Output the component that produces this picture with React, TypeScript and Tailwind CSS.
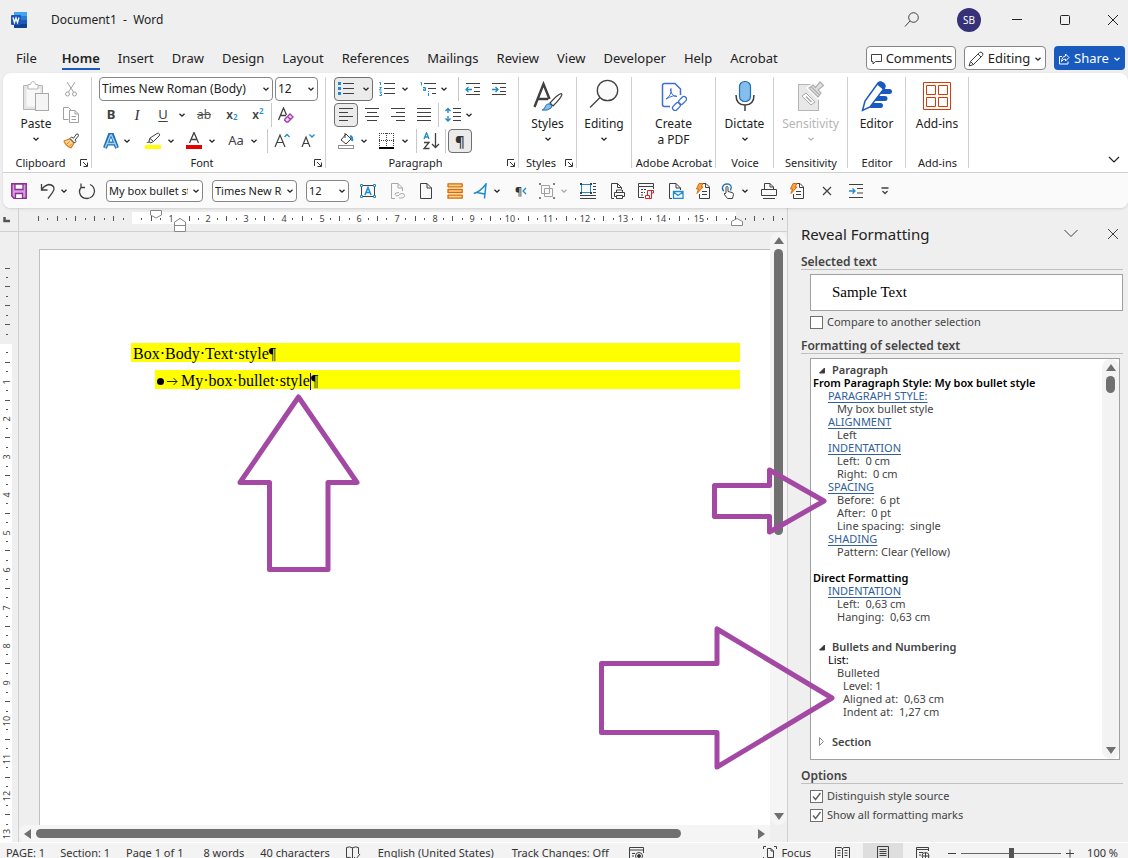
import type { ReactNode } from "react";
import clsx from "clsx";

const TABS = [
  "File",
  "Home",
  "Insert",
  "Draw",
  "Design",
  "Layout",
  "References",
  "Mailings",
  "Review",
  "View",
  "Developer",
  "Help",
  "Acrobat",
];

type IconProps = {
  w?: number;
  h?: number;
  className?: string;
  children: ReactNode;
};

const Icon = ({ w = 16, h = 16, className, children }: IconProps) => (
  <svg
    width={w}
    height={h}
    viewBox={`0 0 ${w} ${h}`}
    fill="none"
    stroke="#404040"
    className={clsx("shrink-0", className)}
    aria-hidden="true"
  >
    {children}
  </svg>
);

const Chevron = ({ className }: { className?: string }) => (
  <Icon w={8} h={8} className={className}>
    <path d="M1.5 2.8 L4 5.2 L6.5 2.8" stroke="currentColor" strokeWidth="1.3" />
  </Icon>
);

type ToolProps = {
  label: string;
  className?: string;
  active?: boolean;
  children: ReactNode;
};

const Tool = ({ label, className, active, children }: ToolProps) => (
  <button
    type="button"
    aria-label={label}
    className={clsx(
      "flex h-6 shrink-0 items-center justify-center rounded",
      active && "border border-[#707070] bg-[#ebebeb]",
      className
    )}
  >
    {children}
  </button>
);

const Divider = ({ className }: { className?: string }) => (
  <span className={clsx("h-6 w-px shrink-0 bg-[#c8c8c8]", className)} />
);

const Launcher = ({ label }: { label: string }) => (
  <button type="button" aria-label={label} className="absolute right-[3px] bottom-1">
    <Icon w={10} h={10}>
      <path d="M1.5 8 V1.5 H8 M4 4 L8 8 M8.5 4.5 V8.5 H4.5" stroke="#333" />
    </Icon>
  </button>
);

type GroupProps = {
  label?: string;
  launcher?: boolean;
  className?: string;
  bodyClassName?: string;
  children: ReactNode;
};

const Group = ({
  label,
  launcher,
  className,
  bodyClassName,
  children,
}: GroupProps) => (
  <section
    className={clsx("relative flex shrink-0 flex-col pt-[3px]", className)}
  >
    <div className={clsx("flex h-[78px] flex-col", bodyClassName)}>
      {children}
    </div>
    <div
      className={clsx(
        "flex h-[18px] items-center justify-center text-[11px] whitespace-nowrap",
        launcher && "pr-[14px]"
      )}
    >
      {label}
    </div>
    {launcher && <Launcher label={`${label} settings`} />}
    <span className="absolute top-1 right-0 bottom-1 w-px bg-[#d0d0d0]" />
  </section>
);

const Row = ({ children }: { children: ReactNode }) => (
  <div className="flex h-[26px] items-center">{children}</div>
);

type PickerProps = {
  label: string;
  value: string;
  small?: boolean;
  className: string;
};

const Picker = ({ label, value, small, className }: PickerProps) => (
  <span className={clsx("relative flex shrink-0 items-center", className)}>
    <select
      aria-label={label}
      className={clsx(
        "h-full w-full appearance-none overflow-hidden rounded border border-[#868686] bg-white pr-[14px] pl-[2px] text-[#222]",
        small ? "text-[11px]" : "text-[12px]"
      )}
    >
      <option>{value}</option>
    </select>
    <Chevron className="pointer-events-none absolute right-[3px]" />
  </span>
);

type BigProps = {
  label: string;
  second?: string;
  menu?: boolean;
  disabled?: boolean;
  children: ReactNode;
};

const Big = ({ label, second, menu, disabled, children }: BigProps) => (
  <button
    type="button"
    disabled={disabled}
    className={clsx(
      "flex flex-col items-center pr-px text-[12px] leading-4",
      disabled && "text-[#b5b5b5]"
    )}
  >
    <span className="flex h-10 items-center justify-center">{children}</span>
    <span>{label}</span>
    {second && <span>{second}</span>}
    {menu && <Chevron className="mt-[3px]" />}
  </button>
);

const bars = (rows: [number, number][], top = 2, step = 4) => (
  <path
    d={rows
      .map(([from, to], i) => `M${from} ${top + i * step + 0.5} H${to}`)
      .join(" ")}
  />
);

const TitleBar = () => (
  <header className="flex h-10 shrink-0 items-center pl-[11px]">
    <Icon>
      <rect x="3" y="0" width="13" height="16" rx="1" fill="#185abd" stroke="none" />
      <path d="M4 0 H15 Q16 0 16 1 V4 H3 V1 Q3 0 4 0" fill="#41a5ee" stroke="none" />
      <path d="M3 4 H16 V8 H3 Z" fill="#2b7cd3" stroke="none" />
      <path d="M3 12 H16 V15 Q16 16 15 16 H4 Q3 16 3 15 Z" fill="#103f91" stroke="none" />
      <rect x="0" y="3" width="10" height="10" rx="1" fill="#1a56b8" stroke="none" />
      <path d="M2 5.5 L3.5 10.5 L5 6 L6.5 10.5 L8 5.5" stroke="#fff" strokeWidth="1.3" />
    </Icon>
    <h1 className="ml-6 text-[12px] whitespace-pre text-[#222]">
      {"Document1  -  Word"}
    </h1>
    <div className="ml-auto flex items-center pr-[9px]">
      <Tool label="Search" className="mr-[33px] w-6">
        <Icon>
          <circle cx="9.5" cy="5.5" r="4.8" />
          <path d="M6 9 L1 14.5" />
        </Icon>
      </Tool>
      <button
        type="button"
        className="mr-[30px] size-6 rounded-full bg-[#373277] text-[10px] text-white"
      >
        SB
      </button>
      <button type="button" aria-label="Minimize" className="mr-9">
        <Icon w={12} h={12}>
          <path d="M1 5.5 H11" stroke="#222" />
        </Icon>
      </button>
      <button type="button" aria-label="Maximize" className="mr-9">
        <Icon w={12} h={12}>
          <rect x="1.5" y="1.5" width="9" height="9" rx="1" stroke="#222" />
        </Icon>
      </button>
      <button type="button" aria-label="Close">
        <Icon w={12} h={12}>
          <path d="M1 1 L11 11 M11 1 L1 11" stroke="#222" />
        </Icon>
      </button>
    </div>
  </header>
);

const TabRow = () => (
  <nav className="flex h-[33px] shrink-0 items-start pt-[6px] pr-[3px] pl-4">
    <div className="flex gap-[18px] text-[13px] text-[#222]">
      {TABS.map((tab) => (
        <button
          key={tab}
          type="button"
          className={clsx(
            "h-6 border-b-2 pt-[3px] leading-[19px]",
            tab === "File" && "mr-[7px]",
            tab === "Home"
              ? "border-[#185abd] font-semibold"
              : "border-transparent"
          )}
        >
          {tab}
        </button>
      ))}
    </div>
    <div className="ml-auto flex text-[13px] whitespace-nowrap">
      <button
        type="button"
        className="flex h-6 w-[90px] items-center justify-center gap-1 rounded border border-[#868686] bg-white pt-px"
      >
        <Icon w={12} h={12}>
          <path d="M1.5 1.5 H11.5 V8.5 H5.5 L3 11 V8.5 H1.5 Z" />
        </Icon>
        Comments
      </button>
      <button
        type="button"
        className="ml-2 flex h-6 w-[82px] items-center justify-center gap-1 rounded border border-[#868686] bg-white pt-px"
      >
        <Icon>
          <path d="M1 15 L2.5 10.5 L11.5 1.5 Q13 0.5 14.3 1.8 Q15.5 3 14.5 4.5 L5.5 13.5 Z M10 3 L13 6 M2.5 10.5 L5.5 13.5" />
        </Icon>
        Editing
        <Chevron />
      </button>
      <button
        type="button"
        className="ml-2 flex h-6 w-[71px] items-center justify-center gap-1 rounded bg-[#185abd] pt-px text-white"
      >
        <Icon w={12} h={12}>
          <path d="M4 3.5 H1.5 V11 H10 V8.5 M7.5 1 L11 4.5 L7.5 8 V6 Q5 6 3.5 8.5 Q4 3.5 7.5 3 Z" stroke="#fff" />
        </Icon>
        Share
        <Chevron />
      </button>
    </div>
  </nav>
);

const ClipboardGroup = () => (
  <Group label="Clipboard" launcher className="w-[89px]">
    <div className="flex">
      <div className="flex w-[60px] flex-col items-center pl-[7px]">
        <Big label="Paste" menu>
          <Icon w={28} h={31}>
            <path d="M1.5 4.5 H20.5 V28.5 H1.5 Z" fill="#e4e4e4" stroke="#b5b5b5" />
            <path d="M4.5 7.5 H18.5 V25.5 H4.5 Z" fill="#f8f8f8" stroke="none" />
            <path d="M6 8 V3.5 H8.5 Q9 0.5 11 0.5 Q13 0.5 13.5 3.5 H16 V8 Z" fill="#fff" stroke="#b5b5b5" />
            <rect x="13.5" y="12.5" width="13" height="17" fill="#f4f4f4" stroke="#a8a8a8" />
          </Icon>
        </Big>
      </div>
      <div className="flex flex-col">
        <Row>
          <Tool label="Cut" className="w-4">
            <Icon>
              <path d="M4 1 L10.5 11 M12 1 L5.5 11" stroke="#a0a0a0" />
              <circle cx="4.5" cy="13" r="2" stroke="#a0a0a0" />
              <circle cx="11.5" cy="13" r="2" stroke="#a0a0a0" />
            </Icon>
          </Tool>
        </Row>
        <Row>
          <Tool label="Copy" className="w-4">
            <Icon>
              <path d="M5.5 12.5 H0.5 V0.5 H5.5 L8.5 3.5" stroke="#a0a0a0" />
              <path d="M6.5 3.5 H12 L15.5 7 V15.5 H6.5 Z M12 3.5 V7 H15.5 M8.5 9.5 H13 M8.5 12.5 H13" stroke="#a0a0a0" />
            </Icon>
          </Tool>
        </Row>
        <Row>
          <Tool label="Format painter" className="w-4">
            <Icon>
              <path d="M0.8 8 L7 6 L11 10 L8 14.8 Q3.5 13.5 0.8 8" fill="#ffd9a0" stroke="#e07b12" strokeWidth="1.3" />
              <path d="M4 11 L7 8.5 M6.5 13 L9 10.5" stroke="#e07b12" />
              <path d="M7 5.5 L8.5 4 L10.5 5.2 L13.5 1 Q15.8 0.5 15.5 2.8 L12 7 L13 8.5 L11.5 10 Z" fill="#fff" />
            </Icon>
          </Tool>
        </Row>
      </div>
    </div>
  </Group>
);

const FontGroup = () => (
  <Group label="Font" launcher className="w-[234px]" bodyClassName="pl-[7px]">
    <Row>
      <Picker label="Font" value="Times New Roman (Body)" className="h-6 w-[174px]" />
      <Picker label="Font size" value="12" className="ml-[2px] h-6 w-[43px]" />
    </Row>
    <Row>
      <Tool label="Bold" className="w-6 text-[13px] font-bold text-[#404040]">
        B
      </Tool>
      <Tool label="Italic" className="ml-[2px] w-6 font-['Liberation_Serif',serif] text-[15px] text-[#333] italic">
        I
      </Tool>
      <Tool label="Underline" className="ml-[2px] w-6 text-[13px] text-[#404040] underline underline-offset-2">
        U
      </Tool>
      <Tool label="Underline style" className="ml-[3px] w-2">
        <Chevron />
      </Tool>
      <Tool label="Strikethrough" className="ml-2 w-5 text-[12px] text-[#555] line-through">
        ab
      </Tool>
      <Tool label="Subscript" className="ml-2 w-5 text-[12px] font-semibold text-[#404040]">
        x<sub className="text-[8px] text-[#1e8bcd]">2</sub>
      </Tool>
      <Tool label="Superscript" className="ml-[6px] w-5 text-[12px] font-semibold text-[#404040]">
        x<sup className="text-[8px] text-[#1e8bcd]">2</sup>
      </Tool>
      <Divider className="ml-[3px]" />
      <Tool label="Clear formatting" className="ml-[6px] w-4">
        <Icon>
          <path d="M0.5 13 L5.5 1 L8.5 8 M2.5 8.5 H8" strokeWidth="1.3" />
          <path d="M7 12 L12 7 L15 10 L10 15 H8.5 L6.5 13 Z M9.5 9.5 L12.5 12.5" fill="#f0d5f2" stroke="#a23bab" strokeWidth="1.3" />
        </Icon>
      </Tool>
    </Row>
    <Row>
      <Tool label="Text effects" className="ml-1 w-4">
        <Icon>
          <path d="M2 15 L7 1.5 H9 L14 15 M4 10.5 H12" stroke="#1d6fb8" strokeWidth="4" />
          <path d="M2.2 14.5 L7.5 2 H8.5 L13.8 14.5 M4 10.5 H12" stroke="#9fd0f5" strokeWidth="1.4" />
        </Icon>
      </Tool>
      <Tool label="Text effects menu" className="ml-1 w-2">
        <Chevron />
      </Tool>
      <Tool label="Highlight" className="ml-[14px] w-4">
        <Icon h={18}>
          <path d="M4 9 L5 6 L12 1.5 Q13.5 0.5 14.5 2 Q15 3 14 4 L8.5 9.5 L5.5 11 Z M5 6.5 L8.5 9.5" />
          <path d="M1 11 L4 9 L6 11 Z" fill="#707070" stroke="none" />
          <path d="M0 13 H16 V17 H0 Z" fill="#ff0" stroke="none" />
        </Icon>
      </Tool>
      <Tool label="Highlight color" className="ml-[6px] w-2">
        <Chevron />
      </Tool>
      <Tool label="Font color" className="ml-[11px] w-4">
        <Icon h={18}>
          <path d="M3.5 11 L8 0.5 L12.5 11 M5 7.5 H11" strokeWidth="1.3" />
          <path d="M0 13 H16 V17 H0 Z" fill="#e60000" stroke="none" />
        </Icon>
      </Tool>
      <Tool label="Font color menu" className="ml-[6px] w-2">
        <Chevron />
      </Tool>
      <Tool label="Change case" className="ml-[10px] w-5 text-[13px] text-[#404040]">
        Aa
      </Tool>
      <Tool label="Change case menu" className="ml-1 w-2">
        <Chevron />
      </Tool>
      <Divider className="ml-[9px]" />
      <Tool label="Grow font" className="ml-[6px] w-4">
        <Icon>
          <path d="M1 14 L6 2 L11 14 M3 9.5 H9" strokeWidth="1.2" />
          <path d="M10.5 4 L13 1.5 L15.5 4" stroke="#1e8bcd" strokeWidth="1.3" />
        </Icon>
      </Tool>
      <Tool label="Shrink font" className="ml-[11px] w-4">
        <Icon>
          <path d="M1 14 L5 4 L9 14 M2.5 10.5 H7.5" strokeWidth="1.2" />
          <path d="M8.5 1.5 L11 4 L13.5 1.5" stroke="#1e8bcd" strokeWidth="1.3" />
        </Icon>
      </Tool>
    </Row>
  </Group>
);

const ParagraphGroup = () => (
  <Group label="Paragraph" launcher className="w-[193px]" bodyClassName="pl-2">
    <Row>
      <Tool label="Bullets" active className="w-[39px] gap-[8px]">
        <Icon>
          {bars([[5, 16], [5, 16], [5, 16]], 2, 5)}
          <path d="M0 1 H3 V4 H0 Z M0 6 H3 V9 H0 Z M0 11 H3 V14 H0 Z" fill="#1e8bcd" stroke="none" />
        </Icon>
        <Chevron />
      </Tool>
      <Tool label="Numbering" className="ml-[6px] w-4">
        <Icon>
          {bars([[5, 16], [5, 16], [5, 16]], 2, 5)}
          <path d="M0.5 1.5 H1.5 V4 M0.5 6.5 H2.5 L0.5 9 H2.5 M0.5 11 H2.5 L1.5 12.5 L2.5 13 V14.5 H0.5" stroke="#1e8bcd" />
        </Icon>
      </Tool>
      <Tool label="Numbering menu" className="ml-[6px] w-2">
        <Chevron />
      </Tool>
      <Tool label="Multilevel list" className="ml-[11px] w-4">
        <Icon>
          <path d="M4 2.5 H16 M8 7.5 H16 M12 12.5 H16" />
          <path d="M0.5 1.5 H1.5 V4.5 M3 6.5 H5.5 V9.5 H3.5 V8 H5.5 M8.5 12 V15 M8.5 10 V11" stroke="#1e8bcd" />
        </Icon>
      </Tool>
      <Tool label="Multilevel menu" className="ml-1 w-2">
        <Chevron />
      </Tool>
      <Divider className="ml-[10px]" />
      <Tool label="Decrease indent" className="ml-[6px] w-4">
        <Icon>
          <path d="M1 2.5 H15 M9 6.5 H15 M9 10.5 H15 M1 13.5 H15" />
          <path d="M7 8.5 H1 M3.5 6 L1 8.5 L3.5 11" stroke="#1e8bcd" strokeWidth="1.3" />
        </Icon>
      </Tool>
      <Tool label="Increase indent" className="ml-[10px] w-4">
        <Icon>
          <path d="M1 2.5 H15 M9 6.5 H15 M9 10.5 H15 M1 13.5 H15" />
          <path d="M1 8.5 H7 M4.5 6 L7 8.5 L4.5 11" stroke="#1e8bcd" strokeWidth="1.3" />
        </Icon>
      </Tool>
    </Row>
    <Row>
      <Tool label="Align left" active className="w-6">
        <Icon>{bars([[1, 15], [1, 10], [1, 15], [1, 10]], 1)}</Icon>
      </Tool>
      <Tool label="Center" className="ml-[6px] w-4">
        <Icon>{bars([[1, 15], [3, 13], [1, 15], [3, 13]], 1)}</Icon>
      </Tool>
      <Tool label="Align right" className="ml-[10px] w-4">
        <Icon>{bars([[1, 15], [6, 15], [1, 15], [6, 15]], 1)}</Icon>
      </Tool>
      <Tool label="Justify" className="ml-[10px] w-4">
        <Icon>{bars([[1, 15], [1, 15], [1, 15], [1, 15]], 1)}</Icon>
      </Tool>
      <Divider className="ml-[6px]" />
      <Tool label="Line spacing" className="ml-[6px] w-4">
        <Icon>
          {bars([[8, 16], [8, 16], [8, 16], [8, 16]], 1)}
          <path d="M3 1.5 V6 M3 9 V14 M0.5 4 L3 1.5 L5.5 4 M0.5 11.5 L3 14 L5.5 11.5" stroke="#1e8bcd" strokeWidth="1.4" />
        </Icon>
      </Tool>
      <Tool label="Line spacing menu" className="ml-1 w-2">
        <Chevron />
      </Tool>
    </Row>
    <Row>
      <Tool label="Shading" className="ml-1 w-4">
        <Icon>
          <path d="M3 7 L8 1 L13 6 L8 11 Z M7 0 V5" />
          <path d="M12 3 Q15 4 14 8" stroke="#1e8bcd" strokeWidth="2" />
          <rect x="0.5" y="12.5" width="15" height="3" fill="#fff" stroke="#909090" />
        </Icon>
      </Tool>
      <Tool label="Shading menu" className="ml-[6px] w-2">
        <Chevron />
      </Tool>
      <Tool label="Borders" className="ml-[11px] w-4">
        <Icon>
          <path d="M0.5 0 V14 M14.5 0 V14 M7.5 0 V14 M0 0.5 H15 M0 7.5 H15" strokeDasharray="1 1" />
          <path d="M0 15 H15" stroke="#000" strokeWidth="2" />
        </Icon>
      </Tool>
      <Tool label="Borders menu" className="ml-[6px] w-2">
        <Chevron />
      </Tool>
      <Divider className="ml-[7px]" />
      <Tool label="Sort" className="ml-[6px] w-[18px]">
        <Icon w={18} h={18}>
          <path d="M1 7 L3.5 0.8 L6 7 M2 5 H5" stroke="#1e8bcd" strokeWidth="1.3" />
          <path d="M1 10.5 H6 L1 16.5 H6.5" strokeWidth="1.3" />
          <path d="M12.5 1 V15.5 M9 12 L12.5 15.5 L16 12" strokeWidth="1.3" />
        </Icon>
      </Tool>
      <Divider className="ml-1" />
      <Tool label="Show marks" active className="ml-[2px] w-6 text-[15px] font-semibold text-[#333]">
        ¶
      </Tool>
    </Row>
  </Group>
);

const Ribbon = () => (
  <div className="flex h-[99px]">
    <ClipboardGroup />
    <FontGroup />
    <ParagraphGroup />
    <Group label="Styles" launcher className="w-[58px]">
      <Big label="Styles" menu>
        <Icon w={30} h={30}>
          <path d="M1.5 26 L10.5 3 L16.5 18 M5 18 H15" strokeWidth="2.4" />
          <path d="M29 13 Q27 11 17 22 L20 25 Q29 16 29 13" fill="#fff" strokeWidth="1.2" />
          <path d="M9 29 Q12 28 12.5 25 Q14 22 17 23 Q20 25 18 27 Q15 30 9 29" fill="#83beec" stroke="#1e6fb8" />
        </Icon>
      </Big>
    </Group>
    <Group className="w-[55px]">
      <Big label="Editing" menu>
        <Icon w={30} h={34}>
          <circle cx="18.5" cy="11.5" r="10.2" fill="#fafafa" strokeWidth="1.3" />
          <path d="M11 18.5 L1 28.5" strokeWidth="1.3" />
        </Icon>
      </Big>
    </Group>
    <Group label="Adobe Acrobat" className="w-[84px]">
      <Big label="Create" second="a PDF">
        <Icon w={26} h={30}>
          <path d="M9 25.5 H3.5 Q1.5 25.5 1.5 23.5 V4.5 Q1.5 2.5 3.5 2.5 H14 L19.5 8 V14" stroke="#3b6fd6" strokeWidth="1.5" />
          <path d="M5 18 Q11 14 10 7.5 Q8.5 8 11 13 Q13 16 16 15.5 Q14 13 5 18" stroke="#3b6fd6" />
          <rect x="17" y="17" width="9" height="5" rx="2.5" transform="rotate(-45 21.5 19.5)" stroke="#3b6fd6" strokeWidth="1.3" />
          <rect x="11" y="23" width="9" height="5" rx="2.5" transform="rotate(-45 15.5 25.5)" stroke="#3b6fd6" strokeWidth="1.3" />
        </Icon>
      </Big>
    </Group>
    <Group label="Voice" className="w-[58px]">
      <Big label="Dictate" menu>
        <Icon w={20} h={32}>
          <rect x="4.5" y="1.5" width="11" height="20" rx="5" fill="#83beec" stroke="#1e6fb8" strokeWidth="1.2" />
          <path d="M1 15 Q1 25 10 25 Q19 25 19 15 M10 25 V31" strokeWidth="1.5" />
        </Icon>
      </Big>
    </Group>
    <Group label="Sensitivity" className="w-[74px]">
      <Big label="Sensitivity" menu disabled>
        <Icon w={28} h={32}>
          <rect x="1.5" y="4.5" width="20" height="26" fill="#e8e8e8" stroke="#b5b5b5" />
          <path d="M9 13 L18 22 L14 25 L5 16 Z" fill="#fff" stroke="#a8a8a8" />
          <path d="M9 16.5 L14.5 22" stroke="#a8a8a8" strokeWidth="1.5" />
          <path d="M12 8 L16 5 L18.5 7.5 L23 2 L26.5 5.5 L21 10 L24 13 L21 17 Z" fill="#e0e0e0" stroke="#fff" strokeWidth="4" />
          <path d="M12 8 L16 5 L18.5 7.5 L23 2 L26.5 5.5 L21 10 L24 13 L21 17 Z M14 6.5 L22.5 15" fill="#e0e0e0" stroke="#b0b0b0" strokeWidth="1.2" />
        </Icon>
      </Big>
    </Group>
    <Group label="Editor" className="w-[58px]">
      <Big label="Editor">
        <Icon w={32} h={32}>
          <path d="M17 11.5 H28.5 M14 18.5 H24 M10 25.5 H19.5" stroke="#185abd" strokeWidth="5" strokeLinecap="round" />
          <path d="M1.5 30.5 L4 21 L17 3 Q19 1 22 3 Q25 5 23.5 8 L9 27 Z" fill="#fff" stroke="#185abd" strokeWidth="1.5" />
          <path d="M16 4.5 L18 2 Q21 1 23 3 Q25 6 23.5 8 L22 9.5 Z" fill="#185abd" stroke="none" />
        </Icon>
      </Big>
    </Group>
    <Group label="Add-ins" className="w-[63px]">
      <Big label="Add-ins">
        <Icon w={28} h={28}>
          <path
            d="M0.5 0.5 H27.5 V27.5 H0.5 Z M3.5 3.5 H12.5 V12.5 H3.5 Z M15.5 3.5 H24.5 V12.5 H15.5 Z M3.5 15.5 H12.5 V24.5 H3.5 Z M15.5 15.5 H24.5 V24.5 H15.5 Z"
            stroke="#d83b01"
          />
        </Icon>
      </Big>
    </Group>
    <button type="button" aria-label="Collapse ribbon" className="mt-auto mr-2 mb-[6px] ml-auto">
      <Icon w={12} h={12}>
        <path d="M1 3 L6 8 L11 3" stroke="#222" strokeWidth="1.2" />
      </Icon>
    </button>
  </div>
);

const LightningDoc = () => (
  <Icon>
    <path d="M7 0.5 H11 L14.5 4 V15.5 H4.5 V11 M10.5 0.5 V4.5 H14.5 M7 8.5 H12 M7 11.5 H12" />
    <path d="M4 0.5 H8 L6 4 H8 L2 10.5 L3.5 6 H1.5 Z" fill="#f7a14a" stroke="#d86a00" />
  </Icon>
);

const QuickAccess = () => (
  <div className="flex h-9 items-center rounded-b-lg border-t border-[#d0d0d0] bg-[#fafafa] pt-px pl-2">
    <Tool label="Save" className="w-4">
      <Icon>
        <path d="M0.8 0.8 H15.2 V15.2 H3 L0.8 13 Z" fill="#da9be0" stroke="#8a2f94" strokeWidth="1.5" />
        <path d="M4 1 H12 V6.5 H4 Z M4.5 15 V10.5 H11.5 V15" fill="#fff" stroke="#8a2f94" strokeWidth="1.3" />
      </Icon>
    </Tool>
    <Tool label="Undo" className="ml-[13px] w-4">
      <Icon>
        <path d="M1.5 1 V7 H7.5 M1.5 7 Q4 2.5 9 1.5 Q14 2 14 6 Q14 8 8 15.5" strokeWidth="1.3" />
      </Icon>
    </Tool>
    <Tool label="Undo menu" className="ml-1 w-2">
      <Chevron />
    </Tool>
    <Tool label="Redo" className="ml-[10px] w-[18px]">
      <Icon w={18} h={18}>
        <path d="M3 1.5 V5.5 H7 M3 5.5 Q1 8 1.5 10.5 Q3 16.5 9 16.5 Q15.5 16 16.5 9.5 Q16.5 4.5 12 2.5" strokeWidth="1.3" />
      </Icon>
    </Tool>
    <Picker small label="Style" value="My box bullet style" className="ml-[10px] h-[22px] w-[97px]" />
    <Picker small label="Quick font" value="Times New Roman" className="ml-[9px] h-[22px] w-[85px]" />
    <Picker small label="Quick font size" value="12" className="ml-[9px] h-[22px] w-[43px]" />
    <Tool label="Text box" className="ml-[11px] w-4">
      <Icon>
        <path d="M1.5 2.5 H14.5 V13.5 H1.5 Z" />
        <path d="M5 12 L8 4.5 L11 12 M6 9.5 H10" stroke="#1e8bcd" strokeWidth="1.5" />
        <path d="M0.5 1.5 H2.5 V3.5 H0.5 Z M13.5 1.5 H15.5 V3.5 H13.5 Z M0.5 12.5 H2.5 V14.5 H0.5 Z M13.5 12.5 H15.5 V14.5 H13.5 Z" fill="#fff" stroke="#1e8bcd" />
      </Icon>
    </Tool>
    <Tool label="Link document" className="ml-[14px] w-4">
      <Icon>
        <path d="M5 15.5 H1.5 V0.5 H8 L12.5 5 V8 M8 0.5 V5 H12.5" stroke="#a8a8a8" />
        <path d="M9 9.5 Q4.5 9.5 5 11.5 Q5.5 13.5 9 12.5 M9 15 Q14.5 15.5 14.5 12.5 Q14 9 9 11.5" stroke="#a8a8a8" />
      </Icon>
    </Tool>
    <Tool label="New" className="ml-3 w-4">
      <Icon>
        <path d="M2.5 0.5 H9 L13.5 5 V15.5 H2.5 Z M9 0.5 V5 H13.5" />
      </Icon>
    </Tool>
    <Tool label="Lists" className="ml-[13px] w-4">
      <Icon>
        <path d="M1 0.8 H15.2 V3.8 H1 Z M1 6.5 H15.2 V9.5 H1 Z M1 12.2 H15.2 V15.2 H1 Z" fill="#ffd388" stroke="#d86a00" strokeWidth="1.3" strokeLinejoin="round" />
      </Icon>
    </Tool>
    <Tool label="Format text" className="ml-[10px] w-4">
      <Icon>
        <path d="M0.8 10.5 Q7 9 13 1 L11.5 15.5 M4 9.5 L11.5 11" stroke="#1e8bcd" strokeWidth="1.5" />
      </Icon>
    </Tool>
    <Tool label="Format text menu" className="ml-1 w-2">
      <Chevron />
    </Tool>
    <Tool label="Right-to-left" className="ml-3 w-4 text-[11px] font-semibold text-[#333]">
      ¶
      <Icon w={5} h={8}>
        <path d="M4 1 L1 4 L4 7" stroke="#1e8bcd" strokeWidth="1.3" />
      </Icon>
    </Tool>
    <Tool label="Group objects" className="ml-[10px] w-4">
      <Icon>
        <path d="M2.5 2.5 H10.5 V10.5 H2.5 Z M5.5 5.5 H13.5 V13.5 H5.5 Z" stroke="#a0a0a0" />
        <path d="M0 0 H2 V2 H0 Z M14 0 H16 V2 H14 Z M0 14 H2 V16 H0 Z M14 14 H16 V16 H14 Z" fill="#808080" stroke="none" />
      </Icon>
    </Tool>
    <Tool label="Group menu" className="ml-[5px] w-2">
      <Chevron className="text-[#a8a8a8]" />
    </Tool>
    <Tool label="Wrap text" className="ml-3 w-4">
      <Icon>
        <path d="M0 12.5 H16 M0 15.5 H16 M13 0.5 H16 M13 3.5 H16 M13 6.5 H16 M13 9.5 H16" />
        <path d="M1.5 1.5 H10.5 V9.5 H1.5 Z" stroke="#1e8bcd" />
        <path d="M0 0 H2 V2 H0 Z M10 0 H12 V2 H10 Z M0 9 H2 V11 H0 Z M10 9 H12 V11 H10 Z" fill="#404040" stroke="none" />
      </Icon>
    </Tool>
    <Tool label="Quick print" className="ml-[14px] w-4">
      <Icon>
        <path d="M4 15.5 H1.5 V0.5 H7.5 L11.5 4.5 V6 M7.5 0.5 V4.5 H11.5" />
        <path d="M6.5 9.5 V7 H12.5 V9.5 M6.5 13.5 H4.5 V9.5 H14.5 V13.5 H12.5 M6.5 12.5 H12.5 V15.5 H6.5 Z" />
      </Icon>
    </Tool>
    <Tool label="Form" className="ml-3 w-4">
      <Icon>
        <path d="M0.5 0.5 H15.5 V3.5 H0.5 Z M0.5 3.5 V14.5 H6 M15.5 3.5 V6" />
        <path d="M3 6.5 H9 M3 9.5 H7 M3 12 H6" strokeDasharray="2 1" />
        <path d="M9.5 12.5 V7.5 H15.5 V10 H13.5 M13.5 8 V15.5 H7.5 V12.5 H11.5 V15" stroke="#e02020" />
      </Icon>
    </Tool>
    <Tool label="Email" className="ml-[14px] w-4">
      <Icon>
        <path d="M4 15.5 H1.5 V0.5 H8 L12.5 5 V7 M8 0.5 V5 H12.5" />
        <path d="M5.5 8.5 H15 V15.5 H5.5 Z M5.5 9 L10 12.5 L15 9" stroke="#1e8bcd" strokeWidth="1.3" />
      </Icon>
    </Tool>
    <Tool label="Quick parts" className="ml-[11px] w-4">
      <LightningDoc />
    </Tool>
    <Tool label="Touch mode" className="ml-[10px] w-4">
      <Icon>
        <path d="M3 8 Q1 7 1.5 4 Q2.5 1 6 0.8 Q10 1 10.3 4.5 L9.5 7.5" stroke="#1e6fb8" strokeWidth="1.3" />
        <path d="M5 10 V4.5 Q5 3.5 6 3.5 Q7 3.5 7 4.5 V8.5 L11 9.5 Q12.5 10 12.5 11.5 L11.5 15.5 H6.5 L3 11 Q4 9.5 5 10.5" fill="#fff" />
      </Icon>
    </Tool>
    <Tool label="Touch mode menu" className="ml-1 w-2">
      <Chevron />
    </Tool>
    <Tool label="Open" className="ml-3 w-4">
      <Icon>
        <path d="M3.5 6 V0.5 H9 L12.5 4 V6 M9 0.5 V4 H12.5 M0.5 6.5 H15.5 V12.5 H0.5 Z M2 15.5 H14" />
      </Icon>
    </Tool>
    <Tool label="Auto text" className="ml-3 w-4">
      <LightningDoc />
    </Tool>
    <Tool label="Delete" className="ml-[14px] w-4">
      <Icon>
        <path d="M4 4 L12 12 M12 4 L4 12" strokeWidth="1.2" />
      </Icon>
    </Tool>
    <Tool label="Indent" className="ml-[13px] w-4">
      <Icon>
        <path d="M1 1.5 H15 M9 5.5 H15 M9 10 H15 M1 14.5 H15" />
        <path d="M1 8 H7 M4.5 5.5 L7 8 L4.5 10.5" stroke="#1e8bcd" strokeWidth="1.3" />
      </Icon>
    </Tool>
    <Tool label="Customize toolbar" className="ml-[17px] w-2">
      <Icon w={8} h={8}>
        <path d="M0.5 1 H7.5 M1.5 4 L4 6.5 L6.5 4" strokeWidth="1.3" />
      </Icon>
    </Tool>
  </div>
);

const CM = 37.7;

// Marks every quarter of a centimetre; halves get a longer tick.
const quarterMarks = (from: number, to: number) => {
  const marks: { at: number; kind: "dot" | "tick" | "number"; value: number }[] = [];
  for (let q = from; q <= to; q++) {
    if (q === 0) continue;
    const whole = q % 4 === 0;
    marks.push({
      at: (q * CM) / 4,
      kind: whole && q > 0 ? "number" : q % 2 === 0 ? "tick" : "dot",
      value: q / 4,
    });
  }
  return marks;
};

const HorizontalRuler = () => (
  <div className="relative h-6 shrink-0 border-b border-[#d0d0d0]">
    <svg width="100%" height="31" className="absolute top-0 left-0 z-10" aria-label="Horizontal ruler">
      <path d="M4.5 9 V13 H10" fill="none" stroke="#555" strokeWidth="2.5" />
      <path d="M18.5 0 V23" stroke="#d0d0d0" />
      <rect x="132" y="4" width="604" height="12" fill="#fff" />
      {quarterMarks(-10, 69).map(({ at, kind, value }) => {
        const x = Math.round(132 + at);
        if (kind === "number" && value < 16) {
          return (
            <text key={at} x={x + 1} y="14" fontSize="9" textAnchor="middle" fill="#444">
              {value}
            </text>
          );
        }
        return kind === "dot" ? (
          <rect key={at} x={x} y="10" width="1" height="2" fill="#555" />
        ) : (
          <rect key={at} x={x} y="8" width="1" height="5" fill="#555" />
        );
      })}
      <path d="M150.5 2.5 H161.5 V7 L156 10 L150.5 7 Z" fill="#fff" stroke="#888" />
      <path d="M174.5 23.5 V14 L180 10.5 L185.5 14 V23.5 Z M174.5 17.5 H185.5" fill="#fff" stroke="#888" />
      <path d="M731.5 17.5 V13.5 L737 10.5 L742.5 13.5 V17.5 Z" fill="#fff" stroke="#888" />
    </svg>
  </div>
);

const VerticalRuler = () => (
  <div className="w-[19px] shrink-0 overflow-hidden border-r border-[#d0d0d0]">
    <svg width="18" height="100%" aria-label="Vertical ruler">
      <rect x="0" y="112" width="12" height="498" fill="#fff" />
      {quarterMarks(-8, 52).map(({ at, kind, value }) => {
        const y = Math.round(111 + at);
        if (kind === "number") {
          return (
            <text
              key={at}
              transform={`translate(10 ${y + 1}) rotate(-90)`}
              fontSize="9"
              textAnchor="middle"
              fill="#444"
            >
              {value}
            </text>
          );
        }
        return kind === "dot" ? (
          <rect key={at} x="6" y={y} width="2" height="1" fill="#555" />
        ) : (
          <rect key={at} x="5" y={y} width="5" height="1" fill="#555" />
        );
      })}
    </svg>
  </div>
);

type ArrowProps = { dir: "up" | "down" | "left" | "right" };

const ARROWS = {
  up: "M5 1 L10 8 H0 Z",
  down: "M0 2 H10 L5 9 Z",
  left: "M1 5 L8 0 V10 Z",
  right: "M9 5 L2 0 V10 Z",
};

const ScrollArrow = ({ dir }: ArrowProps) => (
  <button type="button" aria-label={`Scroll ${dir}`} className="block">
    <Icon w={10} h={10}>
      <path d={ARROWS[dir]} fill="#707070" stroke="none" />
    </Icon>
  </button>
);

const Editor = () => (
  <main className="flex min-w-0 flex-1 flex-col">
    <HorizontalRuler />
    <div className="flex min-h-0 flex-1">
      <VerticalRuler />
      <div className="flex min-w-0 flex-1 flex-col">
        <div className="flex min-h-0 flex-1 pt-[17px] pl-5">
          <article className="flex-1 border-t border-l border-[#c0c0c0] bg-white pt-[93px] pr-[30px] pl-[91px] font-['Liberation_Serif',serif] text-[16px] text-black">
            <p className="mb-2 flex h-[19px] items-center bg-[#ffff00] pt-[3px] pl-[2px]">
              Box·Body·Text·style¶
            </p>
            <p className="ml-6 flex h-[19px] items-center bg-[#ffff00] pt-[3px] pl-[2px]">
              <span className="size-[7px] rounded-full bg-black" />
              <Icon w={11} h={9} className="ml-[3px]">
                <path d="M0 4.5 H10 M6.5 1 L10 4.5 L6.5 8" stroke="#222" />
              </Icon>
              <span className="ml-[3px]">My·box·bullet·style</span>
              <span className="h-[17px] w-px bg-[#0000ff]" />
              <span>¶</span>
            </p>
          </article>
        </div>
        <div className="flex h-[17px] items-center rounded-l-lg bg-[#f5f5f5] px-1">
          <ScrollArrow dir="left" />
          <div className="mx-[3px] flex-1 pr-[72px]">
            <div className="h-[9px] rounded-full bg-[#707070]" />
          </div>
          <ScrollArrow dir="right" />
        </div>
      </div>
      <div className="mb-[17px] flex w-[17px] flex-col items-center rounded-full bg-[#f5f5f5] py-1">
        <ScrollArrow dir="up" />
        <div className="mt-[3px] h-[286px] w-[9px] rounded-full bg-[#707070]" />
        <div className="mt-auto">
          <ScrollArrow dir="down" />
        </div>
      </div>
    </div>
  </main>
);

type Line = {
  text: string;
  kind: "head" | "closed" | "source" | "link" | "value" | "list" | "deep" | "gap" | "break";
};

const LINES: Line[] = [
  { text: "Paragraph", kind: "head" },
  { text: "From Paragraph Style: My box bullet style", kind: "source" },
  { text: "PARAGRAPH STYLE:", kind: "link" },
  { text: "My box bullet style", kind: "value" },
  { text: "ALIGNMENT", kind: "link" },
  { text: "Left", kind: "value" },
  { text: "INDENTATION", kind: "link" },
  { text: "Left:  0 cm", kind: "value" },
  { text: "Right:  0 cm", kind: "value" },
  { text: "SPACING", kind: "link" },
  { text: "Before:  6 pt", kind: "value" },
  { text: "After:  0 pt", kind: "value" },
  { text: "Line spacing:  single", kind: "value" },
  { text: "SHADING", kind: "link" },
  { text: "Pattern: Clear (Yellow)", kind: "value" },
  { text: "", kind: "gap" },
  { text: "Direct Formatting", kind: "source" },
  { text: "INDENTATION", kind: "link" },
  { text: "Left:  0,63 cm", kind: "value" },
  { text: "Hanging:  0,63 cm", kind: "value" },
  { text: "", kind: "break" },
  { text: "Bullets and Numbering", kind: "head" },
  { text: "List:", kind: "list" },
  { text: "Bulleted", kind: "value" },
  { text: "Level: 1", kind: "deep" },
  { text: "Aligned at:  0,63 cm", kind: "deep" },
  { text: "Indent at:  1,27 cm", kind: "deep" },
  { text: "", kind: "break" },
  { text: "Section", kind: "closed" },
];

const FormattingLine = ({ text, kind }: Line) => {
  if (kind === "gap") return <div className="h-[13px]" />;
  if (kind === "break") return <div className="h-[17px]" />;
  if (kind === "head" || kind === "closed") {
    return (
      <div className="flex h-[13px] items-center pl-[6px] font-semibold text-[#444]">
        <Icon w={10} h={10} className="mr-[5px]">
          {kind === "head" ? (
            <path d="M7.5 3 V8 H2.5 Z" fill="#333" />
          ) : (
            <path d="M2.5 0.5 L6.5 4.5 L2.5 8.5 Z" fill="#fff" stroke="#888" />
          )}
        </Icon>
        {text}
      </div>
    );
  }
  if (kind === "link") {
    return (
      <div className="h-[13px] pl-[17px]">
        <a href="#" className="text-[#2f6099] underline underline-offset-2">
          {text}
        </a>
      </div>
    );
  }
  return (
    <div
      className={clsx(
        "h-[13px] whitespace-pre",
        kind === "source" && "pl-[2px] font-semibold text-black",
        kind === "value" && "pl-[26px] text-[#444]",
        kind === "list" && "pl-[17px] text-black",
        kind === "deep" && "pl-8 text-[#444]"
      )}
    >
      {text}
    </div>
  );
};

const Check = ({ label, checked }: { label: string; checked?: boolean }) => (
  <label className="relative flex h-[19px] items-center gap-1 pl-[9px] text-[11px] text-[#444]">
    <input
      type="checkbox"
      defaultChecked={checked}
      className="size-[13px] appearance-none border border-[#707070] bg-white"
    />
    {checked && (
      <Icon w={13} h={13} className="pointer-events-none absolute left-[9px]">
        <path d="M3 6.5 L5.5 9.5 L10.5 3" stroke="#666" strokeWidth="1.5" />
      </Icon>
    )}
    {label}
  </label>
);

const PaneHeading = ({ children }: { children: ReactNode }) => (
  <h3 className="h-4 border-b border-[#c0c0c0] text-[12px] leading-[15px] font-semibold text-[#444]">
    {children}
  </h3>
);

const FormattingPane = () => (
  <aside className="flex w-[341px] shrink-0 flex-col border-l border-[#d0d0d0] pr-[5px] pl-[13px]">
    <div className="flex h-[46px] items-center pt-[6px]">
      <h2 className="text-[15px] text-[#222]">Reveal Formatting</h2>
      <button type="button" aria-label="Pane options" className="ml-auto">
        <Icon>
          <path d="M1.5 4 L8 10.5 L14.5 4" />
        </Icon>
      </button>
      <button type="button" aria-label="Close pane" className="mr-1 ml-[28px]">
        <Icon w={12} h={12}>
          <path d="M1 1 L11 11 M11 1 L1 11" />
        </Icon>
      </button>
    </div>
    <PaneHeading>Selected text</PaneHeading>
    <div className="mt-1 ml-[9px] flex h-[37px] items-center border border-[#a0a0a0] bg-white pl-[21px] font-['Liberation_Serif',serif] text-[15px] text-black">
      Sample Text
    </div>
    <div className="mt-[2px]">
      <Check label="Compare to another selection" />
    </div>
    <div className="mt-[6px]">
      <PaneHeading>Formatting of selected text</PaneHeading>
    </div>
    <div className="mt-1 mr-[3px] ml-[9px] flex h-[402px] border border-[#a0a0a0] bg-white">
      <div className="flex-1 overflow-hidden pt-1 text-[11px] leading-[13px]">
        {LINES.map((line, i) => (
          <FormattingLine key={i} {...line} />
        ))}
      </div>
      <div className="flex w-[17px] flex-col items-center rounded-full bg-[#f3f3f3] py-1">
        <ScrollArrow dir="up" />
        <div className="mt-[3px] h-[17px] w-[9px] rounded-full bg-[#707070]" />
        <div className="mt-auto">
          <ScrollArrow dir="down" />
        </div>
      </div>
    </div>
    <div className="mt-2">
      <PaneHeading>Options</PaneHeading>
    </div>
    <div className="mt-[3px]">
      <Check label="Distinguish style source" checked />
      <Check label="Show all formatting marks" checked />
    </div>
  </aside>
);

const StatusBar = () => (
  <footer className="h-4 shrink-0 border-t border-white bg-[#f3f3f3]">
    <div className="flex h-5 items-center pr-[10px] pl-[6px] text-[11px] leading-[12px] whitespace-nowrap text-[#333]">
      <span>PAGE: 1</span>
      <span className="ml-[15px]">Section: 1</span>
      <span className="ml-4">Page 1 of 1</span>
      <span className="ml-5">8 words</span>
      <span className="ml-4">40 characters</span>
      <Icon className="ml-4">
        <path d="M6.5 2.5 V14 M6.5 3 Q4 1 0.5 2.5 V12.5 Q4 11.5 6.5 14 M6.5 3 Q9 1 12.5 2.5 V9 M8 12 L10 14 L14 9" />
      </Icon>
      <span className="ml-4">English (United States)</span>
      <span className="ml-[18px]">Track Changes: Off</span>
      <Icon className="ml-5">
        <path d="M14.5 8 V2.5 H0.5 V13.5 H5 M0.5 5 H14.5 M3 8.5 H6 M3 11 H5" />
        <circle cx="10" cy="11" r="3.5" />
        <circle cx="10" cy="11" r="1.5" fill="#333" />
      </Icon>
      <div className="ml-auto flex items-center">
        <Icon>
          <path d="M0.5 4 V1.5 H3 M11 1.5 H13.5 V4 M0.5 12 V14.5 H3 M4.5 3.5 H8 L10.5 6 V12.5 H4.5 Z M8 3.5 V6 H10.5" />
        </Icon>
        <span className="ml-[2px]">Focus</span>
        <button type="button" aria-label="Read mode" className="ml-6">
          <Icon>
            <path d="M7.5 3 V14 M0.5 2.5 H6 L7.5 3.5 L9 2.5 H14.5 V13.5 H0.5 Z M2.5 5.5 H5.5 M2.5 8 H5.5 M2.5 10.5 H5.5 M9.5 5.5 H12.5 M9.5 8 H12.5 M9.5 10.5 H12.5" />
          </Icon>
        </button>
        <button type="button" aria-label="Print layout" className="ml-3 flex h-5 w-10 items-center justify-center bg-[#dedede]">
          <Icon>
            <path d="M2.5 1.5 H13.5 V14.5 H2.5 Z M4.5 4.5 H11.5 M4.5 6.5 H11.5 M4.5 8.5 H11.5 M4.5 10.5 H11.5" />
          </Icon>
        </button>
        <button type="button" aria-label="Web layout" className="ml-3">
          <Icon>
            <path d="M13.5 6 V2.5 H1.5 V13.5 H5 M1.5 4.5 H13.5 M4 7.5 H8 M4 10 H6" />
            <circle cx="10.5" cy="11" r="3.5" />
            <path d="M7 11 H14 M10.5 7.5 V14.5" />
          </Icon>
        </button>
        <button type="button" aria-label="Zoom out" className="ml-4">
          <Icon w={10} h={10}>
            <path d="M1 5.5 H9" />
          </Icon>
        </button>
        <input
          type="range"
          aria-label="Zoom"
          defaultValue={50}
          className="ml-1 h-[10px] w-[100px] appearance-none bg-[linear-gradient(#666,#666)] bg-[length:100%_1px] bg-center bg-no-repeat [&::-webkit-slider-thumb]:h-[10px] [&::-webkit-slider-thumb]:w-[5px] [&::-webkit-slider-thumb]:appearance-none [&::-webkit-slider-thumb]:bg-[#555]"
        />
        <button type="button" aria-label="Zoom in" className="ml-1">
          <Icon w={10} h={10}>
            <path d="M1 5.5 H9 M5 1.5 V9.5" />
          </Icon>
        </button>
        <span className="ml-3">100 %</span>
      </div>
    </div>
  </footer>
);

const Callouts = () => (
  <svg
    className="pointer-events-none absolute top-0 left-0 z-20 h-full w-full"
    fill="none"
    stroke="#a349a4"
    strokeWidth="5"
    strokeLinejoin="round"
    aria-hidden="true"
  >
    <path d="M298.5 397 L357 482.5 H328 V569.5 H269.5 V482.5 H240 Z" />
    <path d="M824 501 L769.5 470 V485.5 H714.5 V516.5 H769.5 V532 Z" />
    <path d="M832 698 L717 629 V663.5 H601.5 V732.5 H717 V767 Z" />
  </svg>
);

export default function App() {
  return (
    <div className="relative flex h-screen flex-col overflow-hidden bg-[#efefef] font-['Noto_Sans',sans-serif] text-[#222]">
      <TitleBar />
      <TabRow />
      <div className="z-10 ml-[3px] shrink-0 rounded-lg bg-white shadow">
        <Ribbon />
        <QuickAccess />
      </div>
      <div className="flex min-h-0 flex-1">
        <Editor />
        <FormattingPane />
      </div>
      <StatusBar />
      <Callouts />
    </div>
  );
}
